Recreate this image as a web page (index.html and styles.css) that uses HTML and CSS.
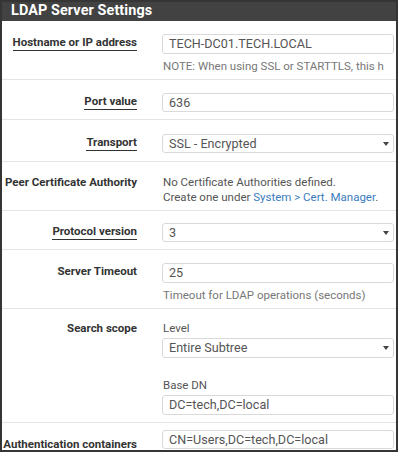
FILE: index.html
```html
<!DOCTYPE html>
<html>
<head>
<meta charset="utf-8">
<link rel="stylesheet" href="styles.css">
</head>
<body>
<div class="panel">
  <div class="panel-heading">LDAP Server Settings</div>

  <div class="row r1">
    <div class="lbl"><span class="u">Hostname or IP address</span></div>
    <div class="ctl">
      <div class="input">TECH-DC01.TECH.LOCAL</div>
      <div class="help">NOTE: When using SSL or STARTTLS, this h</div>
    </div>
  </div>

  <div class="row r2">
    <div class="lbl"><span class="u">Port value</span></div>
    <div class="ctl">
      <div class="input h19">636</div>
    </div>
  </div>

  <div class="row r3">
    <div class="lbl"><span class="u">Transport</span></div>
    <div class="ctl">
      <div class="input select h19">SSL - Encrypted<span class="caret"></span></div>
    </div>
  </div>

  <div class="row r4">
    <div class="lbl plain">Peer Certificate Authority</div>
    <div class="ctl">
      <div class="text">No Certificate Authorities defined.</div>
      <div class="text">Create one under <a class="link">System &gt; Cert. Manager</a>.</div>
    </div>
  </div>

  <div class="row r5">
    <div class="lbl"><span class="u">Protocol version</span></div>
    <div class="ctl">
      <div class="input select h19">3<span class="caret"></span></div>
    </div>
  </div>

  <div class="row r6">
    <div class="lbl">Server Timeout</div>
    <div class="ctl">
      <div class="input">25</div>
      <div class="help">Timeout for LDAP operations (seconds)</div>
    </div>
  </div>

  <div class="row r7">
    <div class="lbl plain">Search scope</div>
    <div class="ctl">
      <div class="text">Level</div>
      <div class="input select sel-level">Entire Subtree<span class="caret"></span></div>
      <div class="text basedn">Base DN</div>
      <div class="input in-basedn">DC=tech,DC=local</div>
    </div>
  </div>

  <div class="row r8">
    <div class="lbl auth"><span class="u">Authentication containers</span></div>
    <div class="ctl">
      <div class="input h19">CN=Users,DC=tech,DC=local</div>
    </div>
  </div>
</div>
</body>
</html>
```

FILE: styles.css
```css
html, body {
  margin: 0;
  padding: 0;
  background: #ffffff;
}
body {
  width: 400px;
  height: 453px;
  font-family: Roboto, "Liberation Sans", sans-serif;
  color: #555555;
}
.panel {
  box-sizing: border-box;
  width: 398px;
  height: 452px;
  border: 2px solid #353535;
  background: #ffffff;
  overflow: hidden;
}
.panel-heading {
  height: 19px;
  background: #424242;
  color: #ffffff;
  font-weight: bold;
  font-size: 14.4px;
  line-height: 17px;
  padding-left: 9px;
  letter-spacing: 0.1px;
}
.row {
  display: flex;
  border-bottom: 1px solid #e4e4e4;
}
.lbl {
  box-sizing: border-box;
  width: 135px;
  flex: none;
  text-align: right;
  font-size: 11.5px;
  font-weight: bold;
  color: #333333;
  line-height: 14px;
  padding-top: 1px;
  white-space: nowrap;
}
.lbl.plain { padding-top: 0; }
.lbl.auth { padding-top: 7px; }
.u {
  border-bottom: 1px solid #333333;
  padding-bottom: 1px;
}
.ctl {
  margin-left: 25px;
  width: 232px;
  flex: none;
}
.input {
  box-sizing: border-box;
  height: 20px;
  border: 1px solid #d9d9d9;
  border-radius: 3px;
  font-size: 12.6px;
  line-height: 18px;
  padding-left: 6px;
  color: #555555;
  position: relative;
  white-space: nowrap;
}
.input.h19 { height: 19px; line-height: 17px; }
.caret {
  position: absolute;
  right: 4px;
  top: 7px;
  width: 0;
  height: 0;
  border-left: 3px solid transparent;
  border-right: 3px solid transparent;
  border-top: 4px solid #444444;
}
.help {
  font-size: 11.5px;
  line-height: 14px;
  color: #777777;
  margin-top: 5px;
  padding-left: 1px;
  white-space: nowrap;
}
.text {
  font-size: 11.5px;
  line-height: 15px;
  color: #555555;
  padding-left: 1px;
  white-space: nowrap;
}
.link { color: #3a7cc0; }

.r1 { padding: 13px 0 6px; }
.r2 { padding: 13px 0 7px; }
.r3 { padding: 14px 0 8px; }
.r4 { padding: 13px 0 5px; }
.r5 { padding: 12px 0 7px; }
.r6 { padding: 13px 0 6px; }
.r7 { padding: 12px 0 7px; }
.r7 .text { line-height: 14px; }
.sel-level { margin-top: 3px; }
.basedn { margin-top: 20px; }
.in-basedn { margin-top: 3px; }
.r8 { padding: 7px 0 10px; border-bottom: none; }
```
